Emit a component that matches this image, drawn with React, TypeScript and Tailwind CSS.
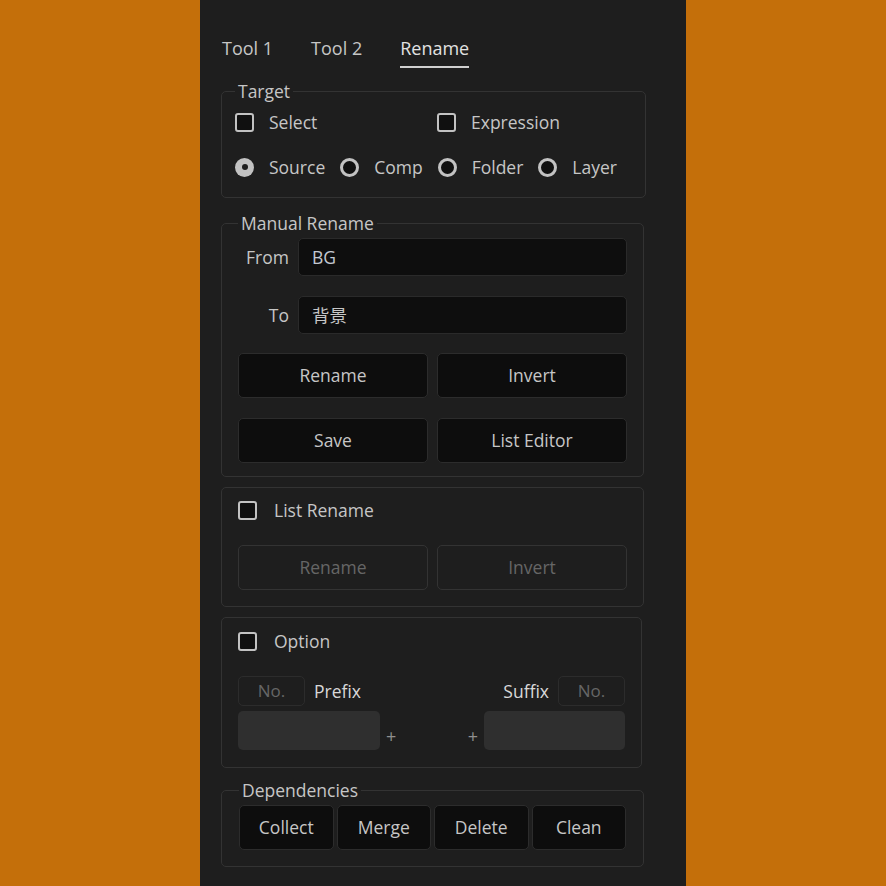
import type { ReactNode } from "react";

const textBase = "text-[17.5px] leading-[24px] text-[#c6c6c6]";

function Checkbox() {
  return <span className="block size-[19px] shrink-0 rounded-[3px] border-[2.5px] border-[#c2c2c2] bg-[#101010]" />;
}

function Radio({ checked = false }: { checked?: boolean }) {
  return checked ? (
    <span className="flex size-[19px] shrink-0 items-center justify-center rounded-full bg-[#c2c2c2]">
      <span className="size-[6px] rounded-full bg-[#1e1e1e]" />
    </span>
  ) : (
    <span className="block size-[19px] shrink-0 rounded-full border-[3px] border-[#c2c2c2] bg-[#101010]" />
  );
}

function Group({ legend, className, children }: { legend: string; className?: string; children: ReactNode }) {
  return (
    <fieldset className={`rounded-[5px] border border-[#333333] ${className ?? ""}`}>
      <legend className={`px-[3px] ${textBase} text-[#bdbdbd]`}>{legend}</legend>
      {children}
    </fieldset>
  );
}

function Btn({ children, disabled = false, className }: { children: ReactNode; disabled?: boolean; className?: string }) {
  return (
    <button
      type="button"
      disabled={disabled}
      className={`flex h-[45px] items-center justify-center rounded-[5px] border ${
        disabled ? "border-[#333333] bg-transparent text-[#666666]" : "border-[#2c2c2c] bg-[#0d0d0d] text-[#c6c6c6]"
      } text-[17.5px] ${className ?? ""}`}
    >
      {children}
    </button>
  );
}

export default function App() {
  const tabs = ["Tool 1", "Tool 2", "Rename"];

  return (
    <div className="flex h-[886px] justify-center bg-[#c46f0a] font-['Open_Sans',sans-serif]">
      <div className="w-[486px] bg-[#1e1e1e] px-[21px] pt-[36px]">
        <nav className="flex gap-[38px] pl-[1px]">
          {tabs.map((tab) => (
            <span
              key={tab}
              className={`border-b-2 pb-[6px] text-[18px] leading-[24px] ${
                tab === "Rename" ? "border-[#cfcfcf] text-[#e2e2e2]" : "border-transparent text-[#c6c6c6]"
              }`}
            >
              {tab}
            </span>
          ))}
        </nav>

        <Group legend="Target" className="mt-[11px] w-[425px] px-[13px] pb-[18px]">
          <div className="grid grid-cols-[202px_1fr] pt-[7px]">
            <label className="flex items-center gap-[15px]">
              <Checkbox />
              <span className={textBase}>Select</span>
            </label>
            <label className="flex items-center gap-[15px]">
              <Checkbox />
              <span className={textBase}>Expression</span>
            </label>
          </div>
          <div className="mt-[21px] flex items-center gap-[15px]">
            {["Source", "Comp", "Folder", "Layer"].map((name, i) => (
              <label key={name} className="flex items-center gap-[15px]">
                <Radio checked={i === 0} />
                <span className={textBase}>{name}</span>
              </label>
            ))}
          </div>
        </Group>

        <Group legend="Manual Rename" className="mt-[13px] w-[423px] px-[16px] pb-[13px]">
          <div className="grid grid-cols-[51px_1fr] items-center gap-x-[9px] gap-y-[20px] pt-[3px]">
            <span className={`${textBase} text-right`}>From</span>
            <div className="flex h-[38px] items-center rounded-[5px] border border-[#2a2a2a] bg-[#0e0e0e] px-[13px] text-[17.5px] text-[#c3c8d2]">
              BG
            </div>
            <span className={`${textBase} text-right`}>To</span>
            <div className="flex h-[38px] items-center rounded-[5px] border border-[#2a2a2a] bg-[#0e0e0e] px-[13px] font-['Open_Sans','Noto_Sans_CJK_SC',sans-serif] text-[17.5px] text-[#c6c6c6]">
              背景
            </div>
          </div>
          <div className="mt-[19px] grid grid-cols-2 gap-x-[9px] gap-y-[20px]">
            <Btn>Rename</Btn>
            <Btn>Invert</Btn>
            <Btn>Save</Btn>
            <Btn>List Editor</Btn>
          </div>
        </Group>

        <section className="mt-[10px] w-[423px] rounded-[5px] border border-[#333333] px-[16px] pb-[16px] pt-[10px]">
          <label className="flex items-center gap-[17px]">
            <Checkbox />
            <span className={textBase}>List Rename</span>
          </label>
          <div className="mt-[23px] grid grid-cols-2 gap-[9px]">
            <Btn disabled>Rename</Btn>
            <Btn disabled>Invert</Btn>
          </div>
        </section>

        <section className="mt-[10px] w-[421px] rounded-[5px] border border-[#333333] px-[16px] pb-[17px] pt-[11px]">
          <label className="flex items-center gap-[17px]">
            <Checkbox />
            <span className={textBase}>Option</span>
          </label>
          <div className="mt-[23px] flex items-center justify-between">
            <div className="flex items-center gap-[9px]">
              <span className="flex h-[30px] w-[67px] items-center justify-center rounded-[5px] border border-[#2c2c2c] text-[17px] text-[#666666]">
                No.
              </span>
              <span className={`${textBase} font-medium text-[#d8d8d8]`}>Prefix</span>
            </div>
            <div className="flex items-center gap-[9px]">
              <span className={`${textBase} font-medium text-[#d8d8d8]`}>Suffix</span>
              <span className="flex h-[30px] w-[67px] items-center justify-center rounded-[5px] border border-[#2c2c2c] text-[17px] text-[#666666]">
                No.
              </span>
            </div>
          </div>
          <div className="mt-[5px] flex items-center justify-between">
            <div className="flex items-end gap-[6px]">
              <span className="block h-[39px] w-[142px] rounded-[5px] bg-[#2f2f2f]" />
              <span className="pb-[2px] text-[18px] leading-[24px] text-[#8f8f8f]">+</span>
            </div>
            <div className="flex items-end gap-[6px]">
              <span className="pb-[2px] text-[18px] leading-[24px] text-[#8f8f8f]">+</span>
              <span className="block h-[39px] w-[141px] rounded-[5px] bg-[#2f2f2f]" />
            </div>
          </div>
        </section>

        <Group legend="Dependencies" className="mt-[10px] w-[423px] pl-[17px] pr-[17px] pb-[16px]">
          <div className="grid grid-cols-4 gap-[3px] pt-[3px]">
            <Btn>Collect</Btn>
            <Btn>Merge</Btn>
            <Btn>Delete</Btn>
            <Btn>Clean</Btn>
          </div>
        </Group>
      </div>
    </div>
  );
}
